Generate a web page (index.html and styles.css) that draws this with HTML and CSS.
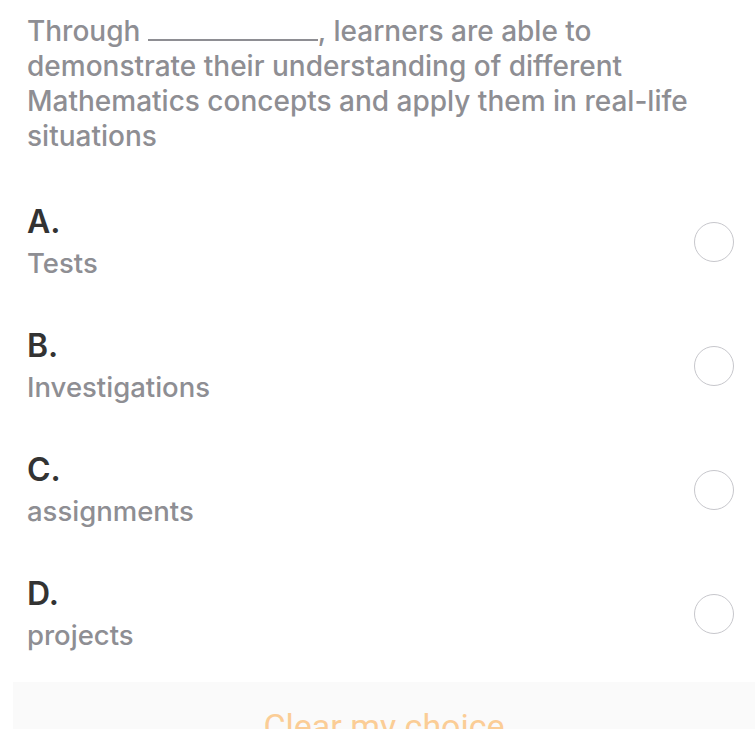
FILE: index.html
```html
<!DOCTYPE html>
<html>
<head>
<meta charset="utf-8">
<link rel="stylesheet" href="styles.css">
</head>
<body>
<div class="page">
  <p class="question">Through <span class="blank"></span>, learners are able to demonstrate their understanding of different Mathematics concepts and apply them in real-life situations</p>
  <div class="options">
    <div class="option">
      <div class="label"><div class="letter">A.</div><div class="text">Tests</div></div>
      <span class="radio"></span>
    </div>
    <div class="option">
      <div class="label"><div class="letter">B.</div><div class="text">Investigations</div></div>
      <span class="radio"></span>
    </div>
    <div class="option">
      <div class="label"><div class="letter">C.</div><div class="text">assignments</div></div>
      <span class="radio"></span>
    </div>
    <div class="option">
      <div class="label"><div class="letter">D.</div><div class="text">projects</div></div>
      <span class="radio"></span>
    </div>
  </div>
</div>
<div class="footer"><span class="clear">Clear my choice</span></div>
</body>
</html>
```
FILE: styles.css
```css
html, body {
  margin: 0;
  padding: 0;
  background: #ffffff;
  overflow: hidden;
  height: 729px;
}
body {
  font-family: Inter, "Noto Sans", sans-serif;
}
.page {
  padding: 14px 21px 0 27px;
}
.question {
  margin: 0;
  font-size: 28px;
  line-height: 35px;
  color: #8e8e93;
  font-weight: 500;
  max-width: 690px;
}
.blank {
  display: inline-block;
  width: 170px;
  height: 1px;
  border-bottom: 2px solid #8e8e93;
}
.options {
  margin-top: 46px;
  display: flex;
  flex-direction: column;
  gap: 40px;
}
.option {
  display: flex;
  justify-content: space-between;
  align-items: center;
  height: 84px;
}
.letter {
  font-size: 32px;
  line-height: 36px;
  font-weight: 600;
  color: #333333;
}
.text {
  margin-top: 6px;
  font-size: 27.5px;
  line-height: 34px;
  font-weight: 500;
  color: #8e8e93;
}
.radio {
  width: 38px;
  height: 38px;
  border-radius: 50%;
  border: 1.5px solid #c7c7cc;
  box-sizing: content-box;
}
.footer {
  margin: 26px 0 0 13px;
  background: #fafafa;
  height: 80px;
  display: flex;
  justify-content: center;
  padding-top: 24px;
  box-sizing: border-box;
}
.clear {
  font-family: Roboto, "Noto Sans", sans-serif;
  font-size: 34px;
  color: #fbcd96;
  line-height: 40px;
}
```
